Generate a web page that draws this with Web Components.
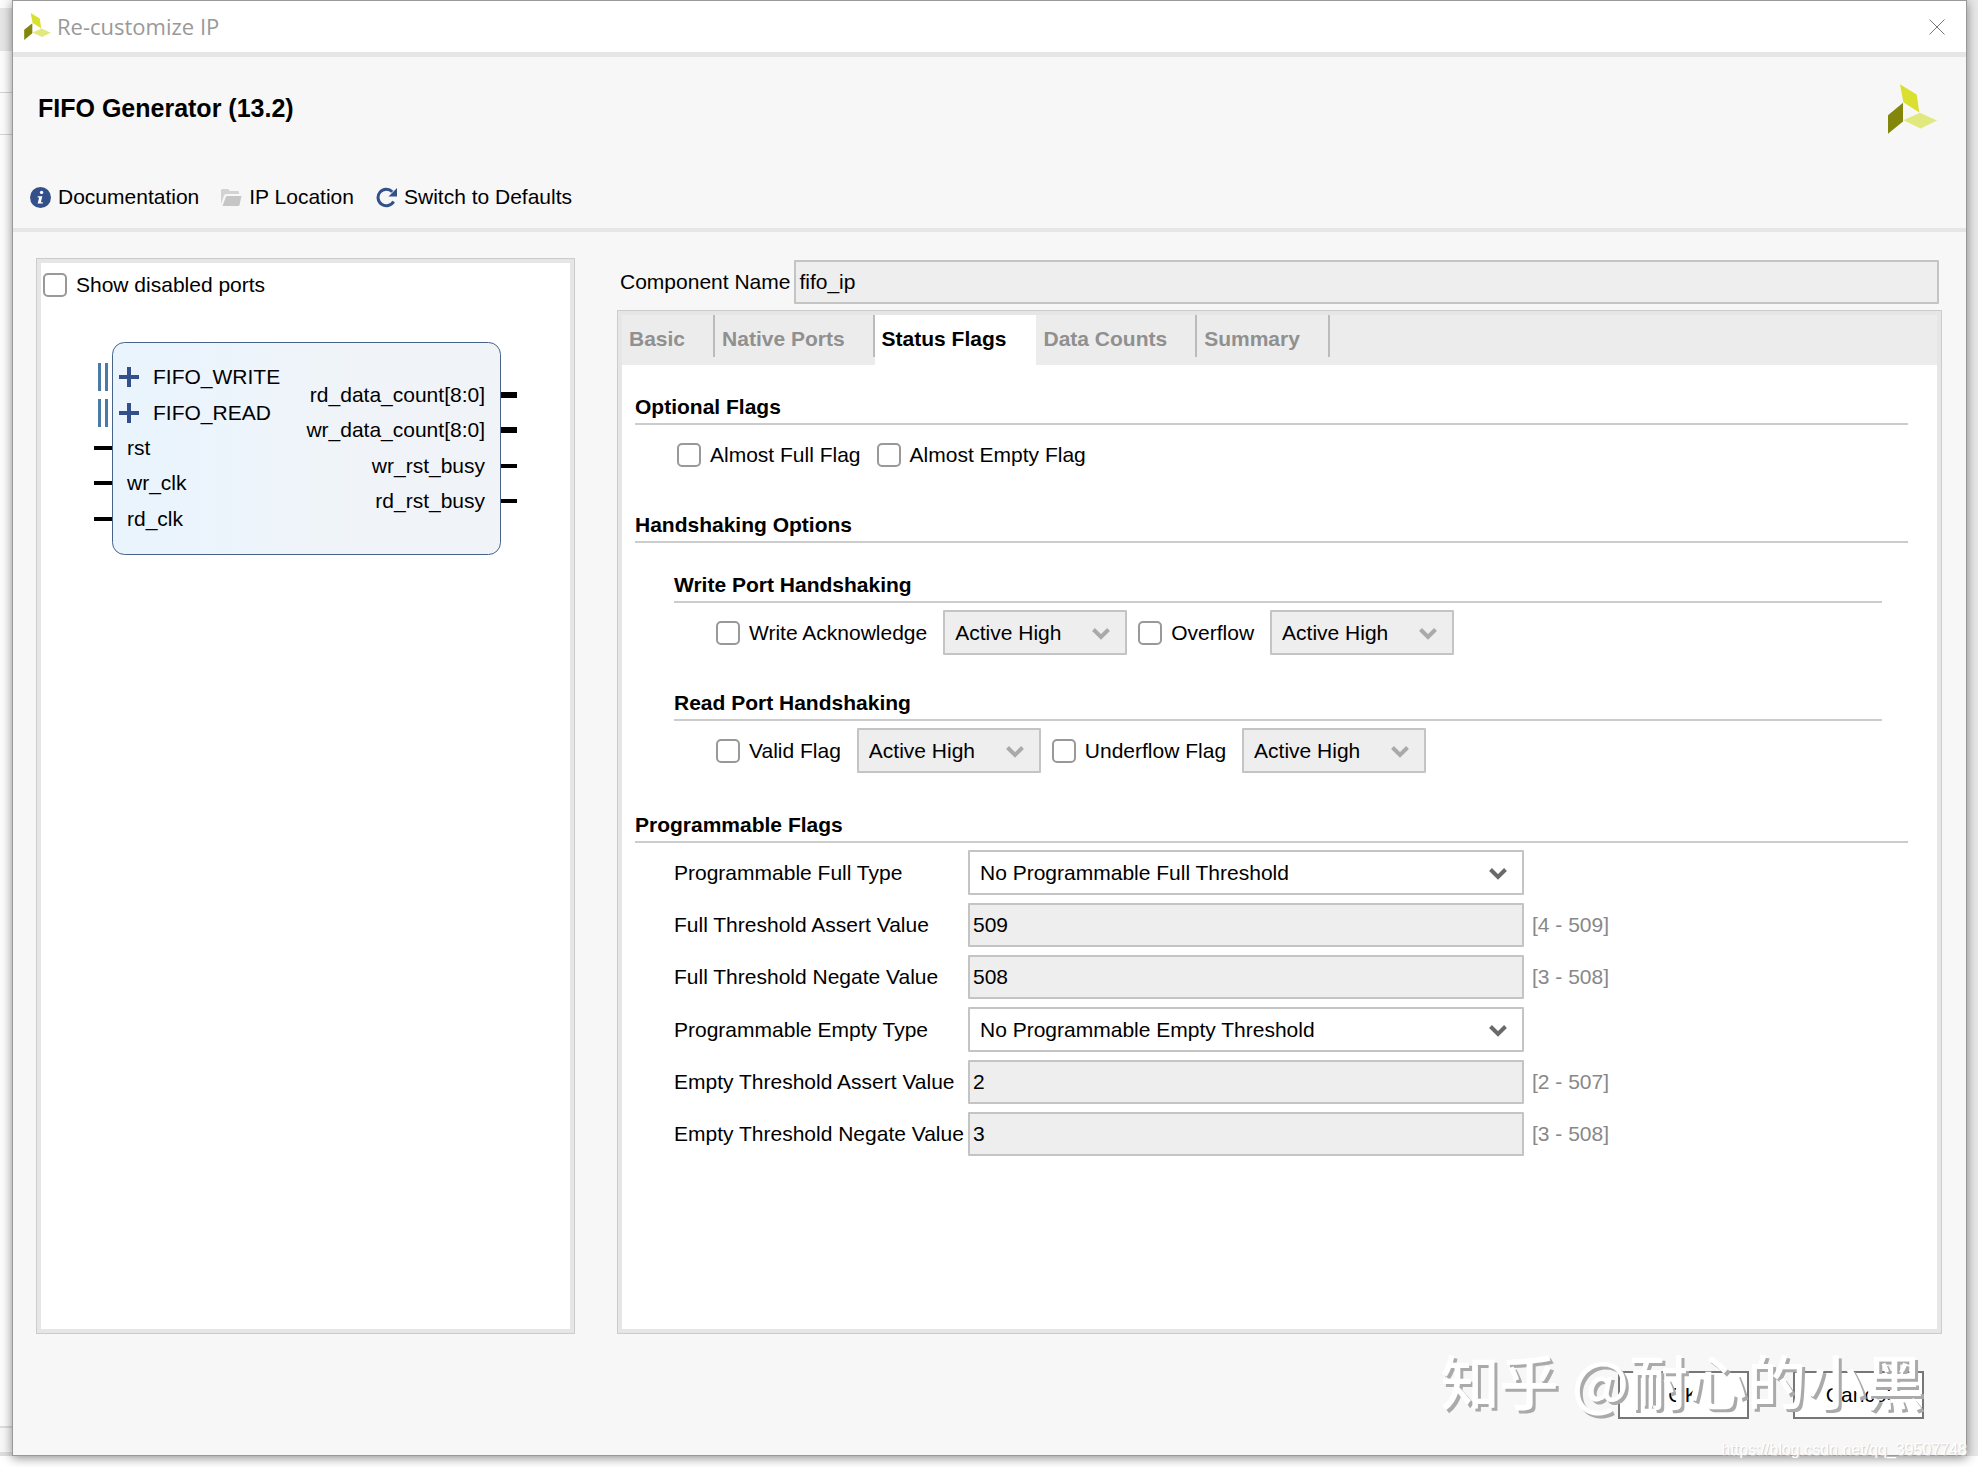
<!DOCTYPE html>
<html lang="en">
<head>
<meta charset="UTF-8">
<title>Re-customize IP</title>
<style>
  body {
    margin: 0;
    min-height: 100vh;
    display: grid;
    grid-template-columns: 12px minmax(0, 1fr) 11px;
    grid-template-rows: 1fr 11px;
    font: 21px/24px "Liberation Sans", Arial, sans-serif;
    color: #000;
    background: #fff;
    position: relative;
    overflow-x: hidden;
  }
  ip-dialog { grid-column: 2; grid-row: 1; }
</style>
</head>
<body>
<desk-edge side="left"></desk-edge>
<ip-dialog heading="Re-customize IP" product="FIFO Generator (13.2)">
  <tool-button slot="tools" icon="info">Documentation</tool-button>
  <tool-button slot="tools" icon="folder">IP Location</tool-button>
  <tool-button slot="tools" icon="refresh">Switch to Defaults</tool-button>

  <symbol-panel slot="side"></symbol-panel>

  <name-field slot="main" label="Component Name" value="fifo_ip"></name-field>
  <tab-panel slot="main" tabs="Basic|Native Ports|Status Flags|Data Counts|Summary" active="Status Flags">
    <flag-group heading="Optional Flags">
      <flag-row loose>
        <check-box>Almost Full Flag</check-box>
        <check-box>Almost Empty Flag</check-box>
      </flag-row>
    </flag-group>
    <flag-group heading="Handshaking Options">
      <flag-group nested heading="Write Port Handshaking">
        <flag-row>
          <check-box>Write Acknowledge</check-box>
          <combo-box label="Write Acknowledge level" value="Active High" disabled></combo-box>
          <check-box>Overflow</check-box>
          <combo-box label="Overflow level" value="Active High" disabled></combo-box>
        </flag-row>
      </flag-group>
      <flag-group nested heading="Read Port Handshaking">
        <flag-row>
          <check-box>Valid Flag</check-box>
          <combo-box label="Valid Flag level" value="Active High" disabled></combo-box>
          <check-box>Underflow Flag</check-box>
          <combo-box label="Underflow Flag level" value="Active High" disabled></combo-box>
        </flag-row>
      </flag-group>
    </flag-group>
    <flag-group heading="Programmable Flags">
      <param-row type="select" label="Programmable Full Type" value="No Programmable Full Threshold"></param-row>
      <param-row label="Full Threshold Assert Value" value="509" range="[4 - 509]"></param-row>
      <param-row label="Full Threshold Negate Value" value="508" range="[3 - 508]"></param-row>
      <param-row type="select" label="Programmable Empty Type" value="No Programmable Empty Threshold"></param-row>
      <param-row label="Empty Threshold Assert Value" value="2" range="[2 - 507]"></param-row>
      <param-row label="Empty Threshold Negate Value" value="3" range="[3 - 508]"></param-row>
    </flag-group>
  </tab-panel>

  <push-button slot="actions">OK</push-button>
  <push-button slot="actions">Cancel</push-button>
</ip-dialog>
<desk-edge side="right"></desk-edge>
<water-mark></water-mark>

<script>
'use strict';

const LOGO = `
  <svg class="logo" viewBox="0 0 147 149" aria-hidden="true">
    <path fill="#d9e02f" d="M36 0 86 31 94 85 46 54Z"/>
    <path fill="#82860a" d="M0 93 45 56V112L0 149Z"/>
    <path fill="#e0e87e" d="M46 108 96 86 147 109 98 133Z"/>
  </svg>`;

const ICONS = {
  info: `
    <circle cx="10.5" cy="10.5" r="10.5" fill="#33508a"/>
    <circle cx="11.6" cy="5.4" r="1.7" fill="#fff"/>
    <path d="M7.8 9.2H12.4L10.8 15.2H12.8V16.6H7.6L9.2 10.6H7.6Z" fill="#fff"/>`,
  folder: `
    <path d="M0 17V3.500Q0 2 1.500 2H7L9 4H17Q18 4 18 5V7H5Q3.600 7 3 8.500Z" fill="#d2d2d2"/>
    <path d="M1.500 19 5 9.500Q5.300 9 6 9H20.500L18.500 18Q18.200 19 17 19Z" fill="#c6c6c6"/>`,
  refresh: `
    <path d="M17.600 14.500A8.300 8.300 0 1 1 16.300 4.700" fill="none" stroke="#33508a" stroke-width="3"/>
    <path d="M21 1V9.500H12.500Z" fill="#33508a"/>`
};

// Rules shared by the text boxes and drop-downs
const FIELD_CSS = `
  input, select {
    box-sizing: border-box;
    width: 100%;
    font: inherit;
    color: #000;
    border: 2px solid #c4c4c4;
    border-radius: 1px;
    background: #fff;
    margin: 0;
    opacity: 1;
  }
  input { height: 44px; padding: 0 3px; }
  select { height: 45px; padding: 0 40px 0 10px; appearance: none; }
  input:disabled, select:disabled, input[readonly] { background: #eee; }
  .drop { position: relative; display: block; }
  .drop svg {
    position: absolute; right: 17px; top: 18px;
    width: 18px; height: 12px;
    fill: none; stroke: #6a6a6a; stroke-width: 4;
    pointer-events: none;
  }
  select:disabled + svg { stroke: #aaa; }
`;
const CHEVRON = '<svg viewBox="0 0 18 12" aria-hidden="true"><path d="M1.500 1.500 9 9 16.500 1.500"/></svg>';

class BaseElement extends HTMLElement {
  constructor() {
    super();
    this._shadow = this.attachShadow({ mode: 'open' });
  }
  connectedCallback() { this._shadow.innerHTML = this.render(); }
  attr(name) { return this.getAttribute(name) || ''; }
}

/** Slices of the windows that lie behind the dialog. */
class DeskEdge extends BaseElement {
  render() {
    return `
      <style>
        :host { display: flex; flex-direction: column; grid-row: 1; grid-column: 3; background: #e8e8e8; }
        :host([side="left"]) { grid-column: 1; background: #fcfcfc; }
        .head { height: 43px; margin-top: 8px; background: #e6e6e6; }
        .line { height: 41px; border-bottom: 1px solid #d4d4d4; }
        .foot { margin-top: auto; height: 24px; border: solid #dedede; border-width: 2px 0 4px; background: #f8f8f8; }
      </style>
      ${this.attr('side') === 'left'
        ? '<div class="head"></div><div class="line"></div><div class="line"></div><div class="foot"></div>'
        : ''}`;
  }
}

/** Window frame: title bar, product header, two columns, action buttons. */
class IpDialog extends BaseElement {
  render() {
    return `
      <style>
        :host {
          display: flex; flex-direction: column;
          position: relative;
          background: #f7f7f7;
          border: 1px solid #999;
          box-shadow: 0 2px 10px rgba(0,0,0,.45);
        }
        .title {
          display: flex; align-items: center; gap: 6px;
          height: 51px; padding: 0 21px 0 11px;
          background: #fff; border-bottom: 5px solid #e6e6e6;
          font: 22px/28px "Open Sans", "Noto Sans", sans-serif; color: #999;
        }
        .title .logo { width: 27px; height: 27px; }
        .title span { flex: 1; padding-bottom: 2px; }
        .close { border: 0; padding: 0; background: none; display: flex; }
        .close svg { width: 16px; height: 16px; stroke: #777; }
        header { padding: 27px 29px 19px 17px; border-bottom: 4px solid #e6e6e6; }
        .product { display: flex; align-items: center; justify-content: space-between; padding-left: 8px; }
        .product .logo { width: 49px; height: 50px; }
        h1 { margin: 0; padding-bottom: 2px; font-size: 25px; line-height: 28px; }
        .tools { display: flex; gap: 22px; margin-top: 51px; }
        .body {
          flex: 1;
          display: grid; grid-template-columns: 539px minmax(0, 1fr); gap: 42px;
          padding: 26px 24px 0 23px;
        }
        .side { display: grid; }
        .main { display: flex; flex-direction: column; }
        footer { display: flex; justify-content: flex-end; gap: 44px; padding: 37px 42px 36px; }
      </style>
      <div class="title">
        ${LOGO}
        <span>${this.attr('heading')}</span>
        <button class="close" aria-label="Close">
          <svg viewBox="0 0 16 16"><path d="M.5.5 15.500 15.500M15.500.5.5 15.500"/></svg>
        </button>
      </div>
      <header>
        <div class="product"><h1>${this.attr('product')}</h1>${LOGO}</div>
        <div class="tools"><slot name="tools"></slot></div>
      </header>
      <div class="body">
        <div class="side"><slot name="side"></slot></div>
        <div class="main"><slot name="main"></slot></div>
      </div>
      <footer><slot name="actions"></slot></footer>`;
  }
}

class ToolButton extends BaseElement {
  render() {
    return `
      <style>
        :host { display: block; }
        button {
          display: flex; align-items: center; gap: 7px;
          border: 0; padding: 0; background: none;
          font: inherit; color: inherit;
        }
        svg { width: 21px; height: 21px; }
      </style>
      <button><svg viewBox="0 0 21 21" aria-hidden="true">${ICONS[this.attr('icon')]}</svg><slot></slot></button>`;
  }
}

class CheckBox extends BaseElement {
  render() {
    return `
      <style>
        :host { display: block; }
        label { display: flex; align-items: center; gap: 9px; white-space: nowrap; }
        input {
          appearance: none; box-sizing: border-box;
          width: 24px; height: 24px; margin: 0;
          border: 2px solid #999; border-radius: 5px; background: #fff;
        }
        input:checked { background: #33508a; }
      </style>
      <label><input type="checkbox"><span><slot></slot></span></label>`;
  }
}

class ComboBox extends BaseElement {
  render() {
    return `
      <style>
        :host { display: block; width: 184px; }
        ${FIELD_CSS}
      </style>
      <span class="drop">
        <select aria-label="${this.attr('label')}" ${this.hasAttribute('disabled') ? 'disabled' : ''}>
          <option>${this.attr('value')}</option>
        </select>${CHEVRON}
      </span>`;
  }
}

/** Left pane with the block symbol of the core. */
class SymbolPanel extends BaseElement {
  render() {
    const buses  = [['FIFO_WRITE', 35], ['FIFO_READ', 71]];
    const inputs = [['rst', 106], ['wr_clk', 141], ['rd_clk', 177]];
    const outputs = [
      ['rd_data_count[8:0]', 53, 6], ['wr_data_count[8:0]', 88, 6],
      ['wr_rst_busy', 124, 4], ['rd_rst_busy', 159, 4]
    ];
    return `
      <style>
        :host {
          display: flex; flex-direction: column;
          padding: 14px 6px 13px; background: #fff;
          border: 1px solid #ccc; box-shadow: inset 0 0 0 4px #e6e6e6;
        }
        check-box { align-self: flex-start; }
        svg { width: 424px; height: 214px; margin: 45px auto 0; font-size: 21px; }
        .bus { stroke: #4a7ba6; stroke-width: 3; }
        .plus { stroke: #33508a; stroke-width: 4; }
        .pin { stroke: #000; }
      </style>
      <check-box>Show disabled ports</check-box>
      <svg viewBox="0 0 424 214">
        <defs>
          <linearGradient id="face"><stop stop-color="#e9f4fe"/><stop offset=".6" stop-color="#f0f4f9"/></linearGradient>
        </defs>
        <rect x="18.500" y=".5" width="388" height="212" rx="12" fill="url(#face)" stroke="#47638a"/>
        ${buses.map(([name, y]) => `
          <path class="bus" d="M5.500 ${y - 14}v28M12.500 ${y - 14}v28"/>
          <path class="plus" d="M25 ${y}h20M35 ${y - 10}v20"/>
          <text x="59" y="${y + 7}">${name}</text>`).join('')}
        ${inputs.map(([name, y]) => `
          <path class="pin" stroke-width="4" d="M0 ${y}h18"/>
          <text x="33" y="${y + 7}">${name}</text>`).join('')}
        ${outputs.map(([name, y, w]) => `
          <path class="pin" stroke-width="${w}" d="M407 ${y}h16"/>
          <text x="391" y="${y + 7}" text-anchor="end">${name}</text>`).join('')}
      </svg>`;
  }
}

class NameField extends BaseElement {
  render() {
    return `
      <style>
        :host { display: block; padding: 2px 3px 6px; }
        div { display: flex; align-items: center; gap: 4px; }
        label { white-space: nowrap; }
        ${FIELD_CSS}
      </style>
      <div>
        <label for="name">${this.attr('label')}</label>
        <input id="name" type="text" value="${this.attr('value')}" readonly>
      </div>`;
  }
}

class TabPanel extends BaseElement {
  render() {
    const active = this.attr('active');
    return `
      <style>
        :host {
          flex: 1; display: block;
          padding: 4px; background: #fff;
          border: 1px solid #ccc; box-shadow: inset 0 0 0 4px #e6e6e6;
        }
        .tabs { display: flex; align-items: flex-start; height: 50px; background: #ececec; }
        button {
          font: inherit; font-weight: 700; color: #909090;
          background: none; border: 0; border-right: 2px solid #bbb;
          padding: 12px 28px 6px 7px; white-space: nowrap;
        }
        button.active { color: #000; background: #fff; border-color: #fff; padding-bottom: 14px; }
        .content { padding: 30px 29px 30px 13px; }
      </style>
      <div class="tabs" role="tablist">
        ${this.attr('tabs').split('|').map(name => `
          <button role="tab" aria-selected="${name === active}" class="${name === active ? 'active' : ''}">${name}</button>`).join('')}
      </div>
      <div class="content" role="tabpanel"><slot></slot></div>`;
  }
}

class FlagGroup extends BaseElement {
  render() {
    return `
      <style>
        :host { display: block; margin-bottom: 36px; }
        :host([nested]) { margin: 30px 26px 36px 39px; }
        :host([nested]:last-child) { margin-top: 36px; margin-bottom: 40px; }
        h2 { margin: 0; padding-bottom: 4px; border-bottom: 2px solid #ccc; font-size: 21px; line-height: 24px; }
      </style>
      <h2>${this.attr('heading')}</h2>
      <slot></slot>`;
  }
}

class FlagRow extends BaseElement {
  render() {
    return `
      <style>
        :host {
          display: flex; align-items: center; gap: 11px;
          min-height: 45px; margin-top: 7px; padding-left: 42px;
        }
        ::slotted(check-box) { padding-right: 5px; }
      </style>
      <slot></slot>`;
  }
}

/** One labelled parameter with an optional range hint. */
class ParamRow extends BaseElement {
  render() {
    const value = this.attr('value');
    return `
      <style>
        :host {
          display: grid; grid-template-columns: 286px 556px auto; column-gap: 8px;
          align-items: center; margin: 8px 0 0 39px;
        }
        :host(:first-child) { margin-top: 7px; }
        label { white-space: nowrap; }
        .range { color: #888; }
        ${FIELD_CSS}
      </style>
      <label for="field">${this.attr('label')}</label>
      ${this.attr('type') === 'select'
        ? `<span class="drop"><select id="field"><option>${value}</option></select>${CHEVRON}</span>`
        : `<input id="field" type="text" value="${value}" disabled>`}
      <span class="range">${this.attr('range')}</span>`;
  }
}

class PushButton extends BaseElement {
  render() {
    return `
      <style>
        :host { display: block; }
        button {
          width: 131px; height: 48px; padding: 0;
          border: 2px solid #777; background: #fff;
          font: inherit; color: #000;
        }
      </style>
      <button><slot></slot></button>`;
  }
}

/** Author marks laid over the lower right corner. */
class WaterMark extends BaseElement {
  render() {
    return `
      <style>
        :host {
          position: absolute; right: 11px; bottom: 7px;
          display: flex; flex-direction: column; align-items: flex-end;
          pointer-events: none; white-space: nowrap;
        }
        .author {
          margin: 0 43px 26px 0;
          font: 500 59px/68px "Noto Sans CJK SC", sans-serif;
          color: #fff; text-shadow: 3px 3px 0 #aaa;
        }
        .link { font-size: 16px; line-height: 20px; color: #fff; text-shadow: 1px 1px 1px #ccc; }
      </style>
      <span class="author" lang="zh">知乎 @耐心的小黑</span>
      <span class="link">https://blog.csdn.net/qq_39507748</span>`;
  }
}

customElements.define('desk-edge', DeskEdge);
customElements.define('ip-dialog', IpDialog);
customElements.define('tool-button', ToolButton);
customElements.define('check-box', CheckBox);
customElements.define('combo-box', ComboBox);
customElements.define('symbol-panel', SymbolPanel);
customElements.define('name-field', NameField);
customElements.define('tab-panel', TabPanel);
customElements.define('flag-group', FlagGroup);
customElements.define('flag-row', FlagRow);
customElements.define('param-row', ParamRow);
customElements.define('push-button', PushButton);
customElements.define('water-mark', WaterMark);
</script>
</body>
</html>
